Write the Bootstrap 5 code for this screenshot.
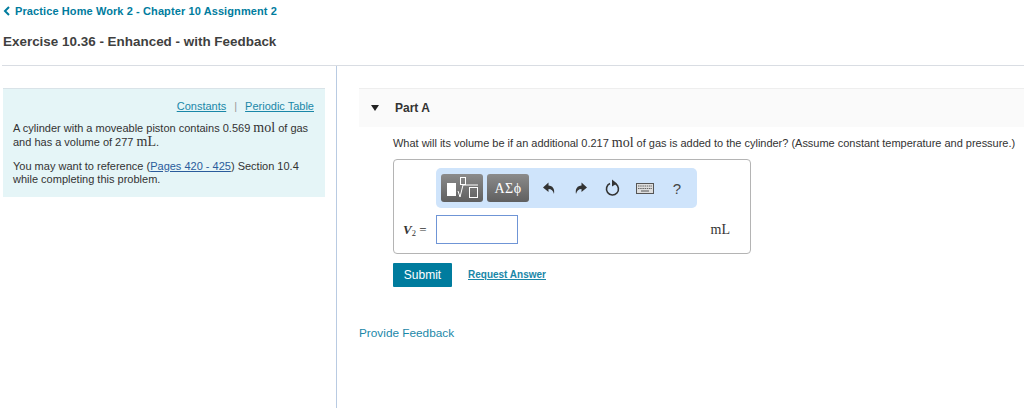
<!DOCTYPE html>
<html lang="en">
<head>
<meta charset="utf-8">
<title>Exercise 10.36</title>
<link href="https://cdn.jsdelivr.net/npm/bootstrap@5.3.0/dist/css/bootstrap.min.css" rel="stylesheet">
<style>
html,body{height:408px;overflow:hidden;background:#fff}
body{font-family:"Liberation Sans",Arial,sans-serif;font-size:11px;color:#333;line-height:13px}
.hdr{padding:4px 0 0 3px;height:65px}
.backlink{display:flex;align-items:center;gap:4px;height:14px;color:#007c9e;font-weight:700;font-size:11px;letter-spacing:.1px;text-decoration:none}
.ttl{margin:16px 0 0 0;color:#3f3f3f;font-weight:700;font-size:13.45px;line-height:16px}
.sep{margin:0 0 0 2px;border-top:1px solid #d9dde3;height:0}
.cols{display:flex;height:343px}
.leftcol{width:337px;flex:none;border-right:1px solid #b9cbe2;padding:22px 11px 0 3px}
.infobox{background:#e5f5f7;border-top:1px solid #d9e3e8;height:109px;padding:10px 11px 0 10px;color:#333}
.refs{text-align:right;line-height:14px;margin-bottom:8px}
.refs a{color:#1a87a8}
.refs i{font-style:normal;color:#999;margin:0 8px}
.infobox p{margin:0 0 11px 0;line-height:13px}
.infobox p a{color:#2a5c9c}
.mth{display:inline-block;font-family:"Liberation Serif",serif;font-size:14px;line-height:13px}
.rightcol{flex:1;min-width:0;padding-top:22px;padding-left:22px}
.parthead{background:#fafafa;border-top:1px solid #eee;height:39px;display:flex;align-items:center;font-weight:700;font-size:12px;color:#333;padding-left:12px}
.tri{width:0;height:0;border-left:4.5px solid transparent;border-right:4.5px solid transparent;border-top:6px solid #222;margin-right:16px}
.qtext{margin:9px 0 0 34px;white-space:nowrap;letter-spacing:-.015px}
.ansbox{margin:9px 0 0 34px;width:358px;height:95px;border:1px solid #b4b4b4;border-radius:4px;padding:8px 0 0 42px}
.tb{width:261px;height:40px;background:#cfe4fb;border-radius:5px;display:flex;align-items:center;padding-left:5px}
.tbtn{height:28px;width:42px;border-radius:3px;background:linear-gradient(#8b8b8b,#5f5f5f);margin-right:4px;display:flex;align-items:center;justify-content:center;color:#fff;font-family:"Liberation Serif",serif;font-size:14px;letter-spacing:.5px}
.ic{display:flex;width:32px;justify-content:center;color:#444;font-size:15px}
.eqrow{display:flex;align-items:center;margin-top:7px;margin-left:-33px}
.vlab{width:33px;font-family:"Liberation Serif",serif;font-size:13px;white-space:nowrap}
.vlab sub{font-size:8.5px}
.vlab em{font-weight:700}
.inp{width:82px;height:29px;border:1px solid #6f95d6;background:#fff}
.unit{margin-left:auto;margin-right:20px;font-family:"Liberation Serif",serif;font-size:14px}
.actions{margin:9px 0 0 34px;display:flex;align-items:center}
.subbtn{background:#007c9e;color:#fff;border:0;border-radius:1px;width:59px;height:24px;font-size:12px;padding:0}
.reqa{margin-left:16px;margin-top:-1px;color:#1a87a8;font-weight:700;font-size:10px}
.fb{margin-top:40px;color:#1a87a8;font-size:11.8px;display:block;text-decoration:none}
</style>
</head>
<body>
<div class="hdr">
<a class="backlink" href="#"><svg width="8" height="10" viewBox="0 0 8 10"><path d="M6 1L2 5l4 4" fill="none" stroke="#007c9e" stroke-width="2"/></svg><span>Practice Home Work 2 - Chapter 10 Assignment 2</span></a>
<h1 class="ttl">Exercise 10.36 - Enhanced - with Feedback</h1>
</div>
<div class="sep"></div>
<div class="cols">
<div class="leftcol">
<div class="infobox">
<div class="refs"><a href="#">Constants</a><i>|</i><a href="#">Periodic Table</a></div>
<p>A cylinder with a moveable piston contains 0.569 <span class="mth">mol</span> of gas and has a volume of 277 <span class="mth">mL</span>.</p>
<p>You may want to reference (<a href="#">Pages 420 - 425</a>) Section 10.4 while completing this problem.</p>
</div>
</div>
<div class="rightcol">
<div class="parthead"><span class="tri"></span>Part A</div>
<div class="qtext">What will its volume be if an additional 0.217 <span class="mth">mol</span> of gas is added to the cylinder? (Assume constant temperature and pressure.)</div>
<div class="ansbox">
<div class="tb">
<div class="tbtn"><svg width="34" height="22" viewBox="0 0 34 22"><rect x="2" y="6" width="9" height="13" fill="#fff"/><rect x="15.500" y=".5" width="5" height="7" fill="none" stroke="#fff"/><path d="M13 14l2 6 3-12h15" fill="none" stroke="#fff"/><rect x="24.500" y="10.500" width="8" height="10" fill="none" stroke="#fff"/></svg></div>
<div class="tbtn">ΑΣϕ</div>
<div class="ic"><svg width="14" height="14" viewBox="0 0 14 14"><path d="M6.500 1.500L1 6.500l5.500 4.500V8c3 0 4.500 1.500 5.500 5 1-5-1.500-8.500-5.500-8.500z" fill="#333"/></svg></div>
<div class="ic"><svg width="14" height="14" viewBox="0 0 14 14"><path d="M7.500 1.500L13 6.500 7.500 11V8C4.500 8 3 9.500 2 13 1 8 3.500 4.500 7.500 4.500z" fill="#333"/></svg></div>
<div class="ic"><svg width="16" height="18" viewBox="0 0 16 18"><path d="M10.500 4.800A6 6 0 1 1 5 4.500" fill="none" stroke="#333" stroke-width="1.600"/><path d="M7 .5l5 4-5 3z" fill="#333"/></svg></div>
<div class="ic"><svg width="18" height="11" viewBox="0 0 18 11"><rect x=".5" y=".5" width="17" height="10" fill="#ddd" stroke="#555"/><path d="M2 3h14M2 5.500h14" stroke="#666" stroke-dasharray="1.500 .7"/><path d="M5 8h8" stroke="#555"/></svg></div>
<div class="ic">?</div>
</div>
<div class="eqrow"><span class="vlab"><em>V</em><sub>2</sub> =</span><span class="inp"></span><span class="unit">mL</span></div>
</div>
<div class="actions"><button class="subbtn" type="button">Submit</button><a class="reqa" href="#">Request Answer</a></div>
<a class="fb" href="#">Provide Feedback</a>
</div>
</div>
</body>
</html>
